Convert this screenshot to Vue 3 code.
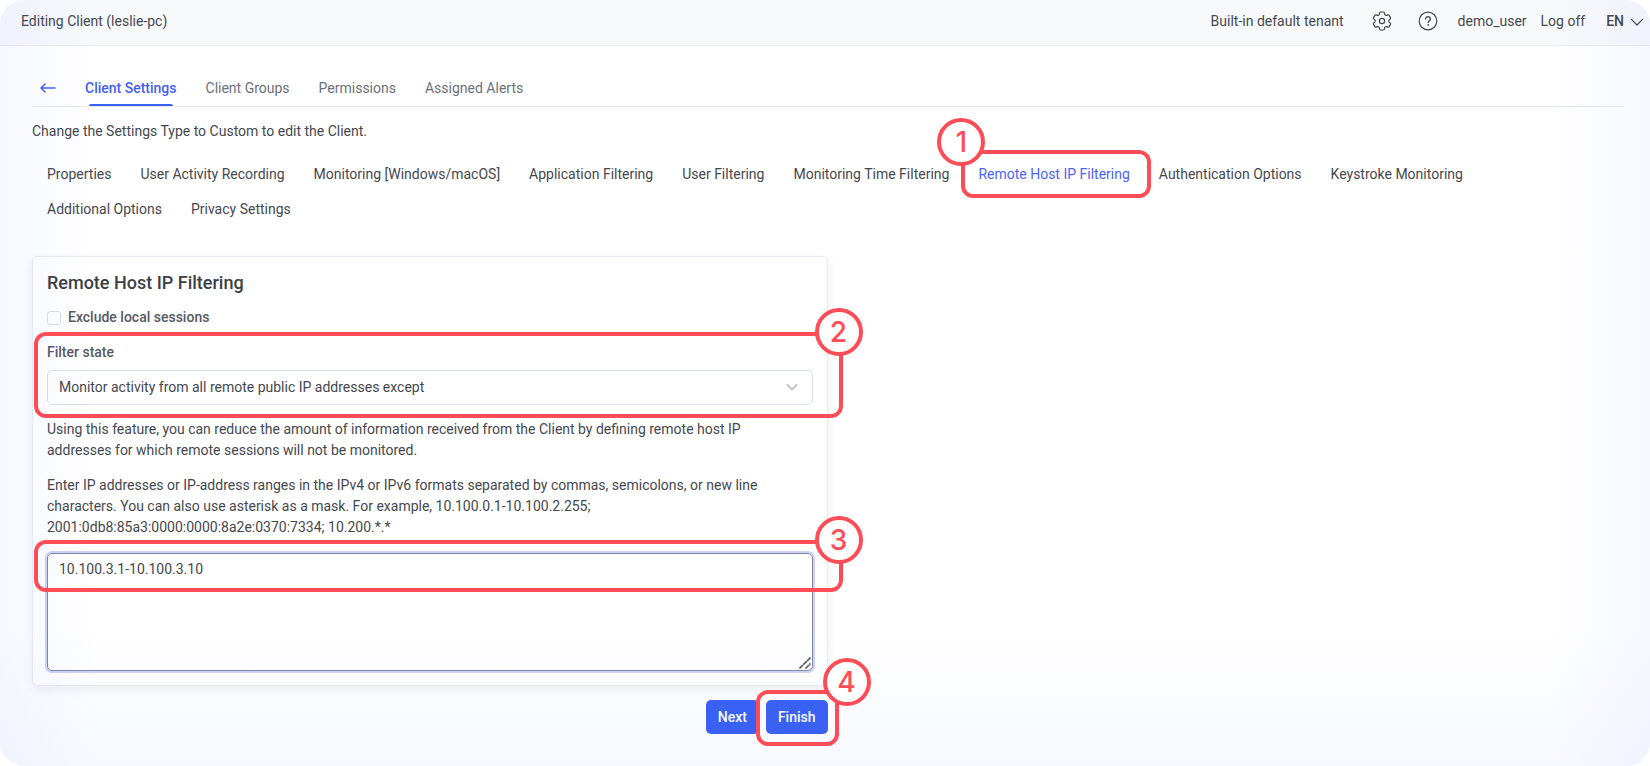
<script setup>
import { ref } from 'vue'

const tabs = ['Client Settings', 'Client Groups', 'Permissions', 'Assigned Alerts']
const sections = [
  'Properties',
  'User Activity Recording',
  'Monitoring [Windows/macOS]',
  'Application Filtering',
  'User Filtering',
  'Monitoring Time Filtering',
  'Remote Host IP Filtering',
  'Authentication Options',
  'Keystroke Monitoring',
  'Additional Options',
  'Privacy Settings',
]
const activeTab = ref('Client Settings')
const activeSection = ref('Remote Host IP Filtering')
const excludeLocal = ref(false)
const filterState = ref('except')
const addresses = ref('10.100.3.1-10.100.3.10')
</script>

<template>
  <div class="page">
    <header class="topbar">
      <span class="page-title">Editing Client (leslie-pc)</span>
      <div class="account">
        <a href="#" class="tenant">Built-in default tenant</a>
        <button type="button" class="icon-button" aria-label="Settings">
          <svg width="24" height="24" viewBox="0 0 24 24" fill="none" stroke="currentColor" stroke-width="1.2" stroke-linejoin="round">
            <path d="M9.594 3.94c.09-.542.56-.94 1.11-.94h2.593c.55 0 1.02.398 1.11.94l.213 1.281c.063.374.313.686.645.87.074.04.147.083.22.127.325.196.72.257 1.075.124l1.217-.456a1.125 1.125 0 0 1 1.37.49l1.296 2.247a1.125 1.125 0 0 1-.26 1.431l-1.003.827c-.293.241-.438.613-.43.992a7.723 7.723 0 0 1 0 .255c-.008.378.137.75.43.991l1.004.827c.424.35.534.955.26 1.43l-1.298 2.247a1.125 1.125 0 0 1-1.369.491l-1.217-.456c-.355-.133-.75-.072-1.076.124a6.47 6.47 0 0 1-.22.128c-.331.183-.581.495-.644.869l-.213 1.281c-.09.543-.56.94-1.11.94h-2.594c-.55 0-1.019-.398-1.11-.94l-.213-1.281c-.062-.374-.312-.686-.644-.87a6.52 6.52 0 0 1-.22-.127c-.325-.196-.72-.257-1.076-.124l-1.217.456a1.125 1.125 0 0 1-1.369-.49l-1.297-2.247a1.125 1.125 0 0 1 .26-1.431l1.004-.827c.292-.24.437-.613.43-.991a6.932 6.932 0 0 1 0-.255c.007-.38-.138-.751-.43-.992l-1.004-.827a1.125 1.125 0 0 1-.26-1.43l1.297-2.247a1.125 1.125 0 0 1 1.37-.491l1.216.456c.356.133.751.072 1.076-.124.072-.044.146-.086.22-.128.332-.183.582-.495.644-.869l.214-1.28Z" />
            <circle cx="12" cy="12" r="2.6" />
          </svg>
        </button>
        <button type="button" class="icon-button" aria-label="Help">
          <svg width="24" height="24" viewBox="0 0 24 24" fill="none" stroke="currentColor" stroke-width="1.2" stroke-linecap="round">
            <circle cx="12" cy="12" r="8.8" />
            <path d="M9.6 10.1c0-1.5 1-2.4 2.4-2.4s2.4.9 2.4 2.2c0 1.7-2.3 1.9-2.3 3.7" stroke-width="1.3" />
            <circle cx="12.1" cy="15.9" r=".5" fill="currentColor" stroke-width=".6" />
          </svg>
        </button>
        <a href="#" class="user">demo_user</a>
        <a href="#" class="logoff">Log off</a>
        <button type="button" class="language">
          EN
          <svg width="14" height="14" viewBox="0 0 14 14" fill="none" stroke="currentColor" stroke-width="1.2" stroke-linecap="round" stroke-linejoin="round">
            <path d="M1.4 4.4 7 10l5.600-5.600" />
          </svg>
        </button>
      </div>
    </header>

    <main class="content">
      <nav class="tabs" aria-label="Client">
        <a href="#" class="back" aria-label="Back">
          <svg width="16" height="16" viewBox="0 0 16 16" fill="none" stroke="currentColor" stroke-width="1.500" stroke-linecap="round" stroke-linejoin="round">
            <path d="M15 8H1M5 4 1 8l4 4" />
          </svg>
        </a>
        <a
          v-for="tab in tabs"
          :key="tab"
          href="#"
          class="tab"
          :class="{ active: tab === activeTab }"
          @click.prevent="activeTab = tab"
        >{{ tab }}</a>
      </nav>

      <p class="hint">Change the Settings Type to Custom to edit the Client.</p>

      <nav class="sections" aria-label="Settings sections">
        <a
          v-for="section in sections"
          :key="section"
          href="#"
          class="section"
          :class="{ active: section === activeSection }"
          @click.prevent="activeSection = section"
        >{{ section }}<span v-if="section === 'Remote Host IP Filtering'" class="frame frame-nav"><span class="step step-left">1</span></span></a>
      </nav>

      <div class="form-column">
        <form class="card" @submit.prevent>
          <h1>Remote Host IP Filtering</h1>
          <label class="check">
            <input v-model="excludeLocal" type="checkbox" />
            Exclude local sessions
          </label>

          <div class="field">
            <label for="filter-state">Filter state</label>
            <div class="select">
              <select id="filter-state" v-model="filterState">
                <option value="except">Monitor activity from all remote public IP addresses except</option>
              </select>
              <svg width="14" height="14" viewBox="0 0 14 14" fill="none" stroke="#c6c8ca" stroke-width="2.2" stroke-linecap="round" stroke-linejoin="round">
                <path d="M2.500 5 7 9.500l4.500-4.500" />
              </svg>
            </div>
            <span class="frame frame-field"><span class="step">2</span></span>
          </div>

          <p>Using this feature, you can reduce the amount of information received from the Client by defining remote host IP addresses for which remote sessions will not be monitored.</p>
          <p id="address-help">Enter IP addresses or IP-address ranges in the IPv4 or IPv6 formats separated by commas, semicolons, or new line characters. You can also use asterisk as a mask. For example, 10.100.0.1-10.100.2.255; 2001:0db8:85a3:0000:0000:8a2e:0370:7334; 10.200.*.*</p>

          <div class="addresses">
            <textarea v-model="addresses" aria-labelledby="address-help"></textarea>
            <svg class="grip" width="12" height="12" viewBox="0 0 12 12" fill="none" stroke="#55585c" stroke-width="1.6">
              <path d="M.5 11.500l11-11M6.500 11.500l5-5" stroke-dasharray="5 .4" />
            </svg>
            <span class="frame frame-address"><span class="step">3</span></span>
          </div>
        </form>

        <div class="actions">
          <button type="button" class="primary">Next</button>
          <div class="finish">
            <button type="button" class="primary">Finish</button>
            <span class="frame frame-finish"><span class="step step-corner">4</span></span>
          </div>
        </div>
      </div>
    </main>
  </div>
</template>

<style>
body {
  background: #fff;
}
</style>

<style scoped>
.page,
.page * {
  box-sizing: border-box;
}

.page {
  position: relative;
  min-height: 100vh;
  overflow: hidden;
  border-radius: 24px;
  background: #fff;
  color: #45484f;
  font: 14px/21px Roboto, "Liberation Sans", sans-serif;
}

/* Soft blue glow along the side and bottom edges */
.page::after {
  content: "";
  position: absolute;
  inset: 0;
  pointer-events: none;
  background:
    linear-gradient(to right, rgba(70, 100, 255, 0.045), rgba(70, 100, 255, 0) 100px),
    linear-gradient(to left, rgba(70, 100, 255, 0.045), rgba(70, 100, 255, 0) 100px),
    linear-gradient(to top, rgba(70, 100, 255, 0.04), rgba(70, 100, 255, 0) 140px);
}

a {
  color: inherit;
  text-decoration: none;
}

button,
select,
textarea {
  font: inherit;
  color: inherit;
}

.topbar {
  display: flex;
  align-items: center;
  justify-content: space-between;
  height: 46px;
  padding: 0 6px 2px 21px;
  border-bottom: 1px solid #e9ecf0;
  background: #f7f9fb;
}

.account {
  display: flex;
  align-items: center;
}

.icon-button,
.language {
  display: flex;
  align-items: center;
  padding: 0;
  border: 0;
  background: none;
}

.tenant {
  margin-right: 26px;
}

.icon-button {
  margin-right: 22px;
  padding-bottom: 2px;
}

.icon-button + .user {
  margin-left: -4px;
  margin-right: 14px;
}

.logoff {
  margin-right: 21px;
}

.language {
  gap: 6px;
  font-weight: 500;
}

.content {
  padding: 18px 27px 19px 32px;
}

.tabs {
  display: flex;
  align-items: center;
  height: 43px;
  padding-top: 7px;
  border-bottom: 1px solid #e6eaef;
}

.back {
  display: flex;
  margin: 0 29px 2px 8px;
  color: #4361f5;
}

.tab {
  position: relative;
  margin-right: 29px;
  line-height: 35px;
  color: #6c7079;
}

.tab.active {
  font-weight: 500;
  color: #3f5ff5;
}

.tab.active::after {
  content: "";
  position: absolute;
  left: 4px;
  right: 4px;
  bottom: 0;
  height: 2px;
  border-radius: 2px 2px 0 0;
  background: #3b60f5;
}

.hint {
  margin: 14px 0 15px;
}

.sections {
  display: flex;
  flex-wrap: wrap;
  column-gap: 1px;
  padding: 0 40px 0 1px;
}

.section {
  position: relative;
  padding: 0 14px;
  line-height: 35px;
}

.section.active {
  color: #4c63f6;
}

.form-column {
  width: 50%;
  max-width: 796px;
  margin-top: 29px;
}

.card {
  padding: 14px;
  border: 1px solid #e9edf3;
  border-radius: 5px;
  box-shadow: 0 4px 10px rgba(40, 50, 80, 0.08);
}

h1 {
  margin: 0 0 12px;
  font-size: 18px;
  font-weight: 500;
  line-height: 24px;
  color: #3b3f46;
}

.check {
  display: flex;
  align-items: center;
  gap: 7px;
  margin-bottom: 14px;
  font-weight: 500;
  color: #565a63;
}

.check input {
  appearance: none;
  width: 14px;
  height: 14px;
  margin: 0;
  border: 1px solid #d9dde6;
  border-radius: 3px;
}

.check input:checked {
  background: #3b60f5;
}

.field {
  position: relative;
  margin-bottom: 14px;
}

.field label {
  display: block;
  margin-bottom: 7px;
  font-weight: 500;
  color: #565a63;
}

.select {
  position: relative;
}

.select select {
  display: block;
  appearance: none;
  width: 100%;
  height: 35px;
  padding: 0 32px 1px 11px;
  border: 1px solid #dce1e9;
  border-radius: 5px;
  background: none;
}

.select svg {
  position: absolute;
  right: 14px;
  top: 10px;
  pointer-events: none;
}

.card p {
  margin: 0 0 14px;
  padding-right: 8px;
}

.addresses {
  position: relative;
  margin-top: 15px;
}

textarea {
  display: block;
  width: 100%;
  height: 118px;
  padding: 5px 11px;
  border: 1px solid #7d87a5;
  border-radius: 5px;
  outline: none;
  background: none;
  box-shadow: 0 0 0 2px #ccd3f5;
  resize: none;
}

.grip {
  position: absolute;
  right: 2px;
  bottom: 2px;
  pointer-events: none;
}

.actions {
  display: flex;
  justify-content: flex-end;
  gap: 7px;
  margin-top: 14px;
}

.finish {
  position: relative;
}

.primary {
  display: block;
  height: 34px;
  padding: 0 12px;
  border: 0;
  border-radius: 5px;
  background: #3a61f3;
  color: #fff;
  font-weight: 500;
}

/* Numbered callouts laid over the controls */
.frame {
  position: absolute;
  z-index: 1;
  border: 4px solid #ff4d58;
  border-radius: 12px;
  pointer-events: none;
}

.frame-nav {
  inset: -7px -7px -6px -3px;
}

.frame-field {
  inset: -10px -30px -13px -13px;
}

.frame-address {
  inset: -13px -30px auto -13px;
  height: 52px;
}

.frame-finish {
  inset: -10px -11px -12px -10px;
}

.step {
  position: absolute;
  top: -28px;
  right: -24px;
  width: 48px;
  height: 48px;
  border: 4px solid #ff4d58;
  border-radius: 50%;
  background: #fff;
  color: #ff4d58;
  font: 500 28px/40px Inter, "Liberation Sans", sans-serif;
  text-align: center;
}

.step-left {
  top: -36px;
  right: auto;
  left: -28px;
}

.step-corner {
  top: -36px;
  right: -36px;
}
</style>
